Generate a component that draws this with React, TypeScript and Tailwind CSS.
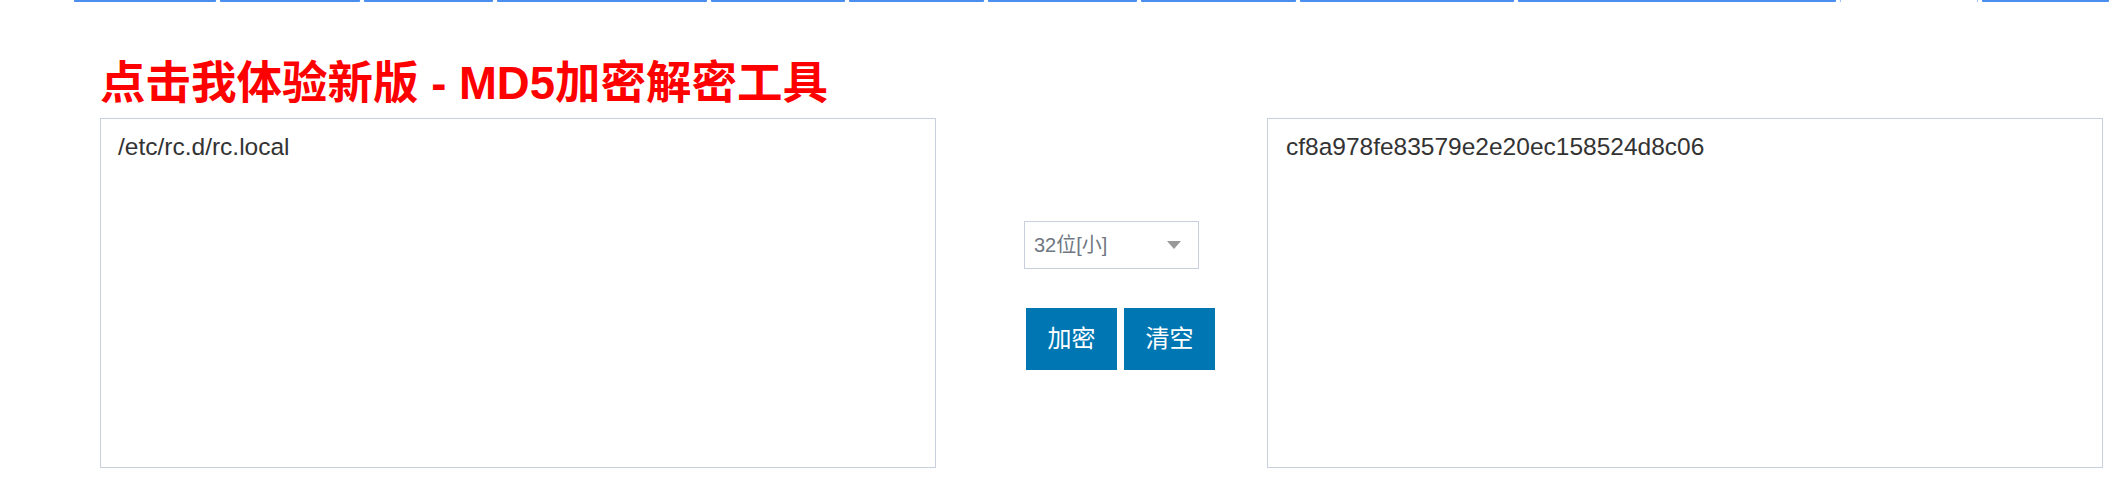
const font = "font-['Liberation_Sans','Noto_Sans_CJK_SC',sans-serif]";

function TabStrip() {
  return (
    <div className="flex gap-[4px] pl-[74px] h-[2px]">
      <div className="w-[142px] h-[2px] bg-[#4a8ef0] rounded-b-[1px]" />
      <div className="w-[140px] h-[2px] bg-[#4a8ef0] rounded-b-[1px]" />
      <div className="w-[129px] h-[2px] bg-[#4a8ef0] rounded-b-[1px]" />
      <div className="w-[210px] h-[2px] bg-[#4a8ef0] rounded-b-[1px]" />
      <div className="w-[134px] h-[2px] bg-[#4a8ef0] rounded-b-[1px]" />
      <div className="w-[135px] h-[2px] bg-[#4a8ef0] rounded-b-[1px]" />
      <div className="w-[149px] h-[2px] bg-[#4a8ef0] rounded-b-[1px]" />
      <div className="w-[155px] h-[2px] bg-[#4a8ef0] rounded-b-[1px]" />
      <div className="w-[214px] h-[2px] bg-[#4a8ef0] rounded-b-[1px]" />
      <div className="w-[318px] h-[2px] bg-[#4a8ef0] rounded-b-[1px]" />
      <div className="w-[138px] h-[2px] border-x border-[#9cc2f7] bg-white" />
      <div className="w-[127px] h-[2px] bg-[#4a8ef0] rounded-b-[1px]" />
    </div>
  );
}

export default function App() {
  return (
    <div className={`w-[2124px] h-[485px] bg-white overflow-hidden ${font}`}>
      <TabStrip />

      <div className="pl-[100px]">
        <h1 className="mt-[59px] mb-[11px] h-[46px] leading-[46px] text-[45.5px] font-bold text-[#ff0000] whitespace-nowrap">
          点击我体验新版 - MD5加密解密工具
        </h1>

        <div className="flex">
          <textarea
            readOnly
            defaultValue="/etc/rc.d/rc.local"
            className={`w-[836px] h-[350px] border border-[#c8cfdd] px-[17px] pt-[10px] text-[24.5px] leading-[1.5] text-[#333] resize-none outline-none bg-white ${font}`}
          />

          <div className="w-[331px] flex flex-col pt-[103px] pl-[88px]">
            <div className="w-[175px] h-[48px] border border-[#c8cfdd] bg-white flex items-center justify-between pl-[9px] pr-[17px]">
              <span className="text-[20px] text-[#6f7782]">32位[小]</span>
              <span className="w-0 h-0 border-l-[7px] border-r-[7px] border-t-[8px] border-l-transparent border-r-transparent border-t-[#999]" />
            </div>

            <div className="flex gap-[7px] mt-[39px] ml-[2px]">
              <button className="w-[91px] h-[62px] bg-[#0077b3] text-white text-[24px] flex items-center justify-center">
                加密
              </button>
              <button className="w-[91px] h-[62px] bg-[#0077b3] text-white text-[24px] flex items-center justify-center">
                清空
              </button>
            </div>
          </div>

          <textarea
            readOnly
            defaultValue="cf8a978fe83579e2e20ec158524d8c06"
            className={`w-[836px] h-[350px] border border-[#c8cfdd] px-[18px] pt-[10px] text-[24.5px] leading-[1.5] text-[#333] resize-none outline-none bg-white ${font}`}
          />
        </div>
      </div>
    </div>
  );
}
